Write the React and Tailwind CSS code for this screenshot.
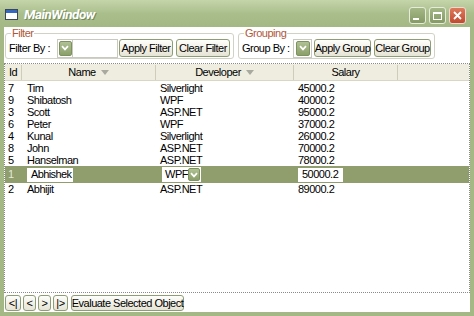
import React from "react";

const Chevron = () => (
  <svg width="8" height="6" viewBox="0 0 8 6">
    <polyline points="1,1.2 4,4.4 7,1.2" fill="none" stroke="white" strokeWidth="1.7" />
  </svg>
);

function GreenBtn({ className }) {
  return (
    <div
      className={
        "flex items-center justify-center rounded-[2px] border border-[#7d925f] bg-gradient-to-b from-[#b0c193] to-[#8b9f6a] " +
        className
      }
    >
      <Chevron />
    </div>
  );
}

function Btn({ children, className }) {
  return (
    <div
      className={
        "flex items-center justify-center rounded-[3px] border border-[#8e9e74] bg-gradient-to-b from-[#fefefb] to-[#e6e4d5] text-black leading-none whitespace-nowrap " +
        (className || "")
      }
    >
      {children}
    </div>
  );
}

const Arrow = () => (
  <svg width="8" height="5" viewBox="0 0 8 5" className="ml-[5px]">
    <polygon points="0,0 8,0 4,5" fill="#a9a9a0" />
  </svg>
);

function Sep() {
  return <div className="w-[1px] h-[15px] self-center bg-[#cfccb9]" />;
}

export default function App() {
  const rows = [
    ["7", "Tim", "Silverlight", "45000.2"],
    ["9", "Shibatosh", "WPF", "40000.2"],
    ["3", "Scott", "ASP.NET", "95000.2"],
    ["6", "Peter", "WPF", "37000.2"],
    ["4", "Kunal", "Silverlight", "26000.2"],
    ["8", "John", "ASP.NET", "70000.2"],
    ["5", "Hanselman", "ASP.NET", "78000.2"],
  ];
  return (
    <div className="w-[474px] h-[316px] flex flex-col bg-[#a3b884] overflow-hidden font-['Liberation_Sans',Arial,sans-serif] text-[11px] tracking-[-0.5px] text-black">
      {/* Title bar */}
      <div className="h-[27px] shrink-0 flex items-center bg-gradient-to-b from-[#c5d5aa] via-[#aabe8c] to-[#a3b884]">
        <div className="ml-[5px] mt-[1px] w-[13px] h-[11px] border border-[#3b4656] bg-white flex flex-col">
          <div className="h-[3px] bg-[#3467c2]" />
        </div>
        <span className="ml-[6px] mt-[1px] text-white font-bold italic text-[13.5px] tracking-[-0.5px] font-['Roboto',sans-serif] [text-shadow:1px_1px_0_#74895a]">
          MainWindow
        </span>
        <div className="ml-auto mr-[8px] mt-[4px] flex gap-[3px]">
          <div className="w-[17px] h-[17px] rounded-[3px] border border-[#e6ecdc] bg-gradient-to-b from-[#a4b786] to-[#869a66] flex items-end justify-start">
            <div className="ml-[3px] mb-[3px] w-[6px] h-[2px] bg-white" />
          </div>
          <div className="w-[17px] h-[17px] rounded-[3px] border border-[#e6ecdc] bg-gradient-to-b from-[#a4b786] to-[#869a66] flex items-center justify-center">
            <div className="w-[9px] h-[8px] border border-white border-t-[2px]" />
          </div>
          <div className="w-[17px] h-[17px] rounded-[3px] border border-[#f0d8cf] bg-gradient-to-b from-[#dc7a5c] to-[#c04a30] flex items-center justify-center">
            <svg width="9" height="9" viewBox="0 0 9 9">
              <path d="M1 1 L8 8 M8 1 L1 8" stroke="white" strokeWidth="1.8" />
            </svg>
          </div>
        </div>
      </div>

      {/* Client */}
      <div className="flex-1 mx-[4px] mb-[4px] bg-white flex flex-col">
        {/* Top group boxes */}
        <div className="h-[36px] shrink-0 flex items-start">
          <div className="relative ml-[1px] mt-[6px] h-[26px] border border-[#d2d1c6] rounded-[3px] flex items-center pt-[4px] pl-[3px] pr-[3px]">
            <span className="absolute left-[5px] top-[-7px] px-[1px] bg-white text-[#b0573a] leading-[13px]">Filter</span>
            <span className="w-[48px] whitespace-nowrap">Filter By :</span>
            <div className="w-[16px] h-[19px] border border-[#c9c9c0] bg-white flex items-center justify-center">
              <GreenBtn className="w-[13px] h-[15px]" />
            </div>
            <div className="w-[45px] h-[19px] border border-[#c9c9c0] border-l-0 bg-white" />
            <Btn className="ml-[1px] w-[54px] h-[18px]">Apply Filter</Btn>
            <Btn className="ml-[3px] w-[54px] h-[18px]">Clear Filter</Btn>
          </div>
          <div className="relative ml-[4px] mt-[6px] h-[26px] border border-[#d2d1c6] rounded-[3px] flex items-center pt-[4px] pl-[3px] pr-[3px]">
            <span className="absolute left-[5px] top-[-7px] px-[1px] bg-white text-[#b0573a] leading-[13px]">Grouping</span>
            <span className="w-[51px] whitespace-nowrap">Group By :</span>
            <div className="w-[19px] h-[19px] border border-[#c9c9c0] bg-white flex items-center justify-end pr-[1px]">
              <GreenBtn className="w-[14px] h-[15px]" />
            </div>
            <Btn className="ml-[2px] w-[57px] h-[18px]">Apply Group</Btn>
            <Btn className="ml-[3px] w-[57px] h-[18px]">Clear Group</Btn>
          </div>
        </div>

        {/* Data grid */}
        <div className="flex-1 border border-dotted border-[#8a8a8a] flex flex-col bg-white">
          <div className="h-[17px] shrink-0 flex bg-[#eeeddf] border-b border-[#d9d6c3]">
            <div className="w-[16px] flex items-center justify-center">Id</div>
            <Sep />
            <div className="w-[133px] flex items-center justify-center">
              Name
              <Arrow />
            </div>
            <Sep />
            <div className="w-[137px] flex items-center justify-center">
              Developer
              <Arrow />
            </div>
            <Sep />
            <div className="w-[103px] flex items-center justify-center">Salary</div>
            <Sep />
            <div className="flex-1" />
          </div>
          <div className="pt-[1px] flex flex-col">
            {rows.map((r) => (
              <div key={r[0]} className="h-[12px] flex items-center leading-[12px]">
                <div className="w-[17px] pl-[3px]">{r[0]}</div>
                <div className="w-[134px] pl-[5px]">{r[1]}</div>
                <div className="w-[138px] pl-[4px]">{r[2]}</div>
                <div className="w-[104px] pl-[4px]">{r[3]}</div>
              </div>
            ))}
            <div className="h-[17px] flex items-center bg-[#8f9e6c]">
              <div className="w-[17px] pl-[3px] text-[#e4e9d6]">1</div>
              <div className="w-[134px] flex items-center">
                <div className="ml-[5px] w-[46px] h-[14px] bg-white pl-[4px] flex items-center whitespace-nowrap tracking-[-0.6px]">Abhishek</div>
              </div>
              <div className="w-[138px] flex items-center">
                <div className="ml-[6px] w-[39px] h-[15px] bg-white pl-[3px] flex items-center">
                  WPF
                  <GreenBtn className="ml-auto mr-[1px] w-[12px] h-[13px]" />
                </div>
              </div>
              <div className="w-[104px] flex items-center">
                <div className="ml-[4px] w-[45px] h-[14px] bg-white pl-[4px] flex items-center">50000.2</div>
              </div>
            </div>
            <div className="h-[12px] flex items-center leading-[12px]">
              <div className="w-[17px] pl-[3px]">2</div>
              <div className="w-[134px] pl-[5px]">Abhijit</div>
              <div className="w-[138px] pl-[4px]">ASP.NET</div>
              <div className="w-[104px] pl-[4px]">89000.2</div>
            </div>
          </div>
        </div>

        {/* Bottom buttons */}
        <div className="h-[19px] shrink-0 flex items-start pt-[2px] pl-[1px] gap-[2px]">
          <Btn className="w-[16px] h-[16px]">&lt;|</Btn>
          <Btn className="w-[13px] h-[16px]">&lt;</Btn>
          <Btn className="w-[13px] h-[16px]">&gt;</Btn>
          <Btn className="w-[15px] h-[16px]">|&gt;</Btn>
          <Btn className="ml-[1px] w-[113px] h-[16px]">Evaluate Selected Object</Btn>
        </div>
      </div>
    </div>
  );
}
